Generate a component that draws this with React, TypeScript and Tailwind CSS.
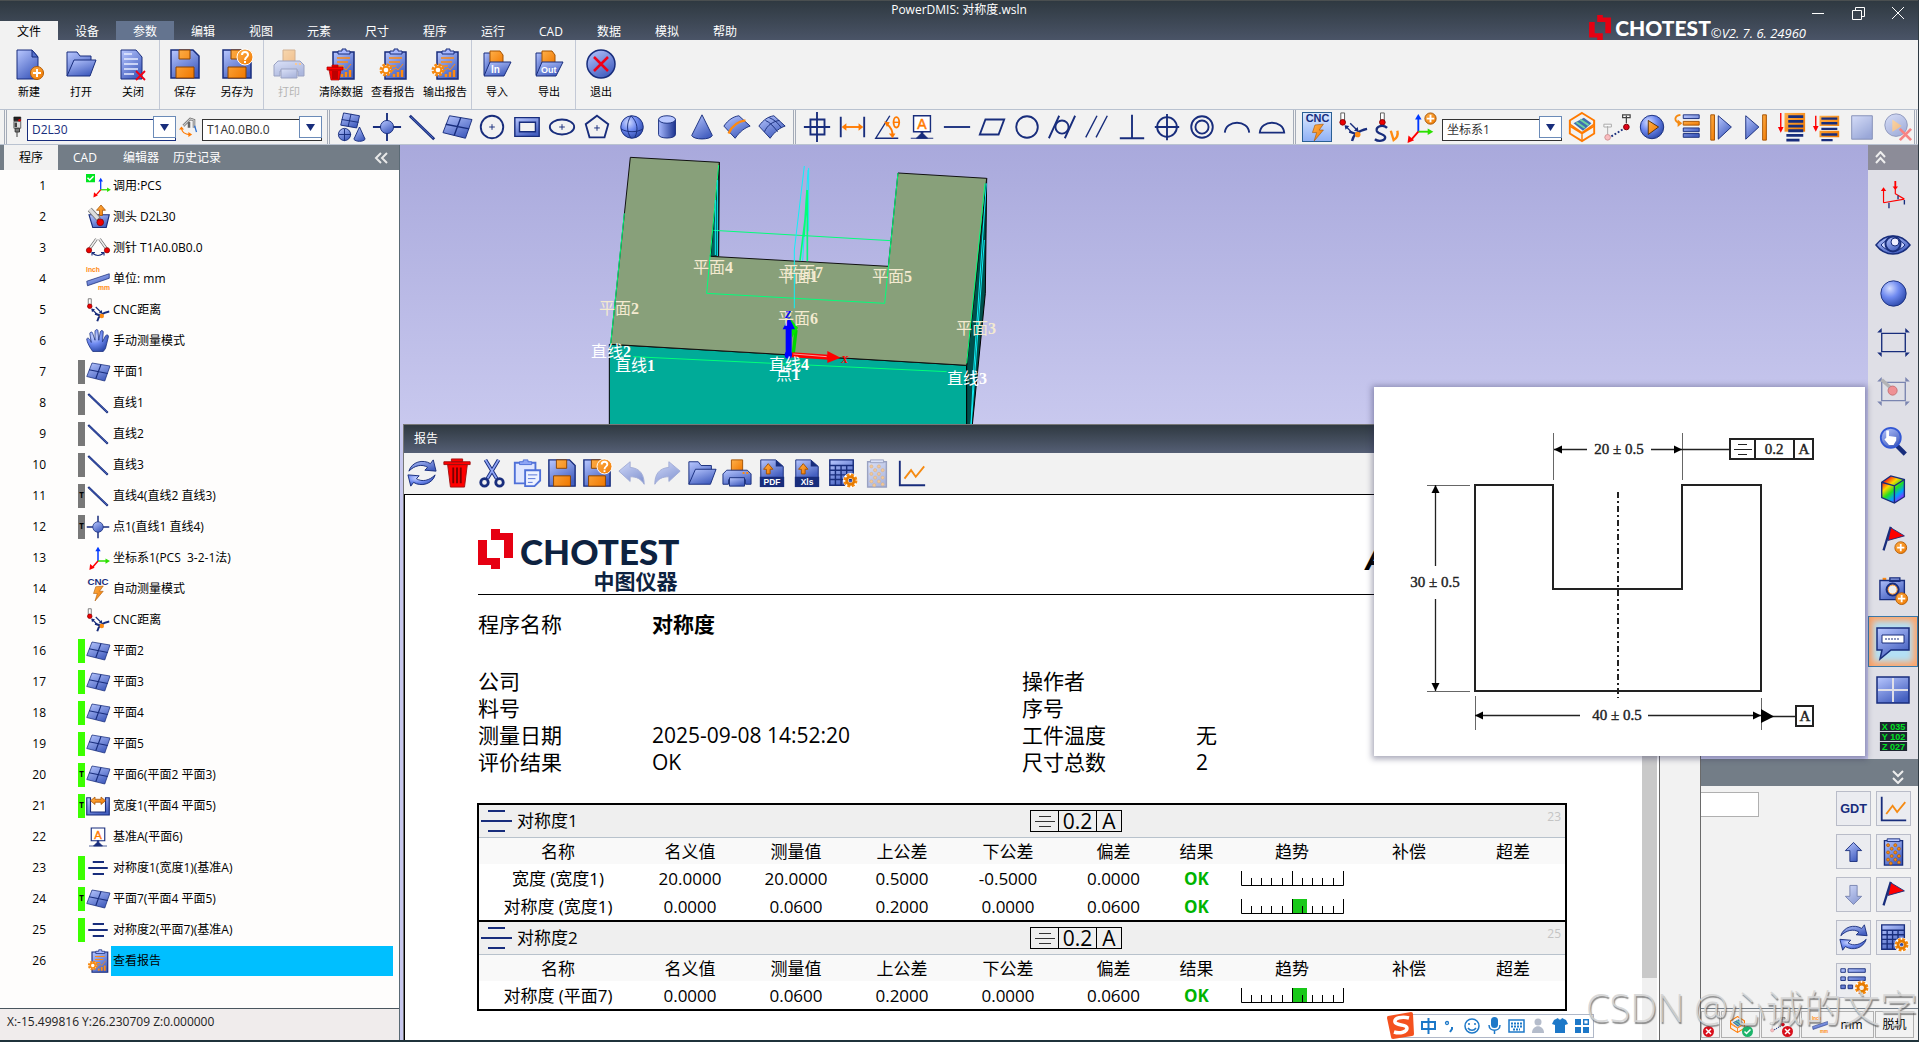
import React, { useState } from 'react';

interface Row {
  icon: string;
  label: string;
  bar?: 'gray' | 'green';
  temp?: boolean;
}

interface Feature {
  id: number;
  title: string;
  rows: string[][];
}

const menus = ['文件', '设备', '参数', '编辑', '视图', '元素', '尺寸', '程序', '运行', 'CAD', '数据', '模拟', '帮助'];

const ribbon = [
  [['new', '新建'], ['open', '打开'], ['closeDoc', '关闭']],
  [['save', '保存'], ['saveAs', '另存为']],
  [['print', '打印'], ['clear', '清除数据'], ['report', '查看报告'], ['report', '输出报告']],
  [['in', '导入'], ['out', '导出']],
  [['exit', '退出']],
];

const featureTools = ['features', 'point', 'line', 'plane', 'circle', 'slot', 'ellipse', 'polygon', 'sphere', 'cylinder', 'cone', 'curve', 'surface'];
const toleranceTools = ['location', 'distance', 'angle', 'datum', 'straight', 'flat', 'round', 'cylindricity', 'parallel', 'perpendicular', 'position', 'concentric', 'arc', 'profile'];
const runTools = ['box3d', 'path', 'play', 'step', 'stepBar', 'stepEnd', 'listAll', 'listPart', 'stop', 'cancelRun'];
const viewTools = ['axes', 'eye', 'ball', 'frame', 'frameProbe', 'zoom', 'cube', 'flagAdd', 'camera', 'comment', 'quad', 'xyz'];
const reportTools = ['refresh', 'trash', 'cut', 'paste', 'save', 'saveAs', 'undo', 'redo', 'open', 'printer', 'pdf', 'xls', 'gridGear', 'dotsOff', 'chart'];
const dockTools = ['gdt', 'chart', 'up', 'dots', 'down', 'flag', 'refresh', 'gridGear', 'listGear'];

const program: Row[] = [
  { icon: 'pcsOk', label: '调用:PCS' },
  { icon: 'probeHead', label: '测头 D2L30' },
  { icon: 'stylus', label: '测针 T1A0.0B0.0' },
  { icon: 'unit', label: '单位: mm' },
  { icon: 'cncDist', label: 'CNC距离' },
  { icon: 'hand', label: '手动测量模式' },
  { icon: 'plane', label: '平面1', bar: 'gray' },
  { icon: 'line', label: '直线1', bar: 'gray' },
  { icon: 'line', label: '直线2', bar: 'gray' },
  { icon: 'line', label: '直线3', bar: 'gray' },
  { icon: 'line', label: '直线4(直线2 直线3)', bar: 'gray', temp: true },
  { icon: 'point', label: '点1(直线1 直线4)', bar: 'gray', temp: true },
  { icon: 'pcs', label: '坐标系1(PCS  3-2-1法)' },
  { icon: 'cnc', label: '自动测量模式' },
  { icon: 'cncDist', label: 'CNC距离' },
  { icon: 'plane', label: '平面2', bar: 'green' },
  { icon: 'plane', label: '平面3', bar: 'green' },
  { icon: 'plane', label: '平面4', bar: 'green' },
  { icon: 'plane', label: '平面5', bar: 'green' },
  { icon: 'plane', label: '平面6(平面2 平面3)', bar: 'green', temp: true },
  { icon: 'width', label: '宽度1(平面4 平面5)', bar: 'green', temp: true },
  { icon: 'datum', label: '基准A(平面6)' },
  { icon: 'symmetry', label: '对称度1(宽度1)(基准A)', bar: 'green' },
  { icon: 'plane', label: '平面7(平面4 平面5)', bar: 'green', temp: true },
  { icon: 'symmetry', label: '对称度2(平面7)(基准A)', bar: 'green' },
  { icon: 'report', label: '查看报告' },
];

const columns = ['名称', '名义值', '测量值', '上公差', '下公差', '偏差', '结果', '趋势', '补偿', '超差'];

const results: Feature[] = [
  {
    id: 23,
    title: '对称度1',
    rows: [
      ['宽度 (宽度1)', '20.0000', '20.0000', '0.5000', '-0.5000', '0.0000'],
      ['对称度 (宽度1)', '0.0000', '0.0600', '0.2000', '0.0000', '0.0600'],
    ],
  },
  {
    id: 25,
    title: '对称度2',
    rows: [['对称度 (平面7)', '0.0000', '0.0600', '0.2000', '0.0000', '0.0600']],
  },
];

// canvas labels: text, number, x, y
const canvasLabels: [string, string, number, number][] = [
  ['平面', '4', 293, 128],
  ['平面', '7', 383, 133],
  ['平面', '1', 378, 137],
  ['平面', '5', 472, 137],
  ['平面', '2', 199, 169],
  ['平面', '6', 378, 179],
  ['平面', '3', 556, 189],
  ['直线', '2', 191, 212],
  ['直线', '1', 215, 226],
  ['直线', '4', 369, 225],
  ['点', '1', 376, 235],
  ['直线', '3', 547, 239],
];

const N = '#182d7c';
const B = 'url(#blue)';
const O = 'url(#orange)';

const gear = (
  <>
    <circle cx="25" cy="24" r="5" fill="none" stroke="#fff" strokeWidth="6" />
    <circle cx="25" cy="24" r="6" fill="none" stroke="#f58a12" strokeWidth="3" strokeDasharray="3 1.7" />
    <circle cx="25" cy="24" r="4" fill="none" stroke="#e57b00" strokeWidth="3" />
  </>
);
const plus = (
  <>
    <circle cx="24" cy="24" r="6.5" fill={O} stroke="#b55a00" />
    <path d="M24 20v8M20 24h8" stroke="#fff" strokeWidth="2" />
  </>
);
const doc = <path d="M4 2h15l6 7v22H4z" fill={B} stroke={N} />;
const folder = (
  <>
    <path d="M2 28V4h10l3 4h11v5" fill={B} stroke={N} />
    <path d="M2 28 9 12h22l-6 16z" fill={B} stroke={N} />
  </>
);
const floppy = (
  <>
    <path d="M2 2h22l6 6v22H2z" fill={B} stroke={N} strokeWidth="1.5" />
    <path d="M10 2h11v9H10zM7 19h18v11H7z" fill={O} stroke="#8a4300" />
  </>
);
const clipboard = (
  <>
    <path d="M8 4h21v27H8z" fill={B} stroke={N} strokeWidth="1.5" />
    <path d="M13 6V3h4V1h4v2h4v3z" fill="#a9baff" stroke={N} />
    <path d="M12 10h13M12 14h11M12 18h7" stroke="#ff8a10" strokeWidth="1.5" />
    <path d="m15 23 4-3 2 2 5-6" fill="none" stroke="#ff8a10" />
    <path d="M17 29v-3M21 29v-5M25 29v-7" stroke="#ff8a10" strokeWidth="2.5" />
  </>
);
const printerShape = (
  <>
    <path d="M10 2h12v12H10z" fill={O} stroke="#a55200" />
    <path d="M5 13h22l4 4v11h-6v-5H7v5H1V17z" fill={B} stroke={N} />
    <path d="M8 21h16v9H8z" fill={B} stroke={N} />
    <path d="M22 16h2M26 16h2" stroke="#ff8a10" strokeWidth="2" />
  </>
);
const flagShape = (
  <>
    <path d="M5 28 13 2" stroke={N} strokeWidth="2.5" />
    <path d="m13 3 15 9-18 5z" fill="#f00" stroke={N} />
  </>
);
const frameShape = (
  <>
    <path d="M3 6h26v20H3z" fill="none" stroke={N} strokeWidth="1.5" />
    <path d="M-2 5h5V0zM34 5h-5V0zM-2 27h5v5zM34 27h-5v5z" fill={N} />
  </>
);
const dotsShape = (
  <>
    <path d="M6 4h20v27H6z" fill={B} stroke={N} strokeWidth="1.5" />
    <path d="M9 5V2h14v3z" fill="#b9c8ff" stroke={N} />
    {[[10, 9], [18, 9], [14, 13], [22, 13], [10, 17], [18, 17], [14, 21], [22, 21], [10, 25], [18, 25], [22, 28], [13, 29]].map(([x, y]) => (
      <circle key={`${x}-${y}`} cx={x} cy={y} r="1.7" fill="#f58a12" stroke="#a55200" strokeWidth="0.6" />
    ))}
  </>
);
const axesShape = (
  <>
    <path d="M16 20V5" stroke="#0038ff" strokeWidth="2" />
    <path d="m12.500 7 3.500-6 3.500 6z" fill="#0038ff" />
    <path d="M16 20h11" stroke="#2be000" strokeWidth="2" />
    <path d="m26 16.500 6 3.500-6 3.500z" fill="#2be000" />
    <path d="m16 20-7 8" stroke="#f00" strokeWidth="2" />
    <path d="m11.500 29-7 3 1-8z" fill="#f00" />
  </>
);
const cncDistShape = (
  <>
    <path d="M3 1h4v8H3z" fill="#fff" stroke="#555" />
    <circle cx="5" cy="11" r="3" fill="#e00" stroke="#800" />
    <path d="m13 12 7 7M8 15l7 7" stroke={N} strokeWidth="1.5" />
    <path d="m22 21-1-5-4 4zM7 14l5 1-4 4z" fill={N} />
    <path d="M15 31c1-6 6-11 16-13M21 24l-9-3" fill="none" stroke={N} strokeWidth="2.500" />
    <circle cx="21" cy="24" r="3" fill="#ff8a10" />
  </>
);
const arrowLines = (
  <path d="M12 5h16M12 10h16M12 15h16M12 20h16" stroke={N} strokeWidth="3" />
);

const icons: Record<string, React.ReactNode> = {
  new: <>{doc}<path d="M19 2v7h6z" fill="#5672cf" stroke={N} /><g transform="translate(0 1)">{plus}</g></>,
  open: folder,
  closeDoc: <>{doc}<path d="M7 6h8M7 11h14M7 16h14M7 21h14M7 26h10" stroke="#e8edff" strokeWidth="1.5" /><path d="m19 23 9 9M28 23l-9 9" stroke="#f00018" strokeWidth="1.8" /></>,
  save: floppy,
  saveAs: <>{floppy}<circle cx="24" cy="9" r="8" fill={O} stroke="#fff" /><path d="M21 7c0-4 6-4 6 0 0 2-3 2-3 5M24 13v2" fill="none" stroke="#fff" strokeWidth="2" /></>,
  print: <g opacity="0.4">{printerShape}</g>,
  printer: printerShape,
  clear: <>{clipboard}<path d="M2 19h16v3H2zM7 17h6v2H7zM4 22h12l-2 10H6z" fill="#f00" stroke="#a00" strokeWidth="0.7" /><path d="M8 23v8M10 23v8M12 23v8" stroke="#7a0000" /></>,
  report: <>{clipboard}<circle cx="9" cy="22" r="5" fill="#fff" /><circle cx="9" cy="22" r="5" fill="none" stroke="#f58a12" strokeWidth="3" strokeDasharray="2.600 1.300" /><circle cx="9" cy="22" r="3.300" fill="#fff" stroke="#f58a12" strokeWidth="2" /></>,
  in: <><path d="M3 5h7v22H3z" fill={B} stroke={N} /><path d="M9 3h10l3 4v10H9z" fill={O} stroke="#a55200" /><path d="m3 28 6-14h21l-7 14z" fill={B} stroke={N} /><text x="10" y="25" fontSize="10" fontWeight="700" fill="#fff">In</text></>,
  out: <><path d="M3 5h7v22H3z" fill={B} stroke={N} /><path d="M9 3h10l3 4v10H9z" fill={O} stroke="#a55200" /><path d="m3 28 6-14h21l-7 14z" fill={B} stroke={N} /><text x="8" y="25" fontSize="9" fontWeight="700" fill="#fff">Out</text></>,
  exit: <><circle cx="16" cy="16" r="14" fill={B} stroke={N} strokeWidth="1.5" /><path d="m9 9 14 14M23 9 9 23" stroke="#f00018" strokeWidth="2.500" /></>,
  features: <><path d="m7 1 17 3-3 13-17-3z" fill={B} stroke={N} /><path d="m15 2-3 13M5 8l18 3" stroke={N} /><circle cx="8" cy="24" r="6.500" fill={B} stroke={N} /><path d="M2 24h13M8 18v13" stroke={N} /><path d="m24 16 6 13c-2 3-10 3-12 0z" fill={B} stroke={N} /></>,
  point: <><path d="M16 1v30M1 16h30" stroke={N} strokeWidth="2" /><circle cx="16" cy="16" r="7" fill={B} stroke={N} /></>,
  line: <><path d="m3 4 26 25" stroke={N} strokeWidth="3" /><path d="m4 5 24 23" stroke="#5672cf" /></>,
  plane: <><path d="m8 4 24 4-7 20-24-6z" fill={B} stroke={N} /><path d="m20 6-7 19M4 13l25 5" stroke={N} strokeWidth="1.500" /></>,
  circle: <><circle cx="16" cy="16" r="12" fill="none" stroke={N} strokeWidth="2" /><path d="M16 13v6M13 16h6" stroke={N} /></>,
  slot: <><path d="M3 6h26v20H3z" fill={B} stroke={N} strokeWidth="1.500" /><path d="M8 11h17v10H8z" fill="#f2f2f2" stroke={N} strokeWidth="1.500" /></>,
  ellipse: <><ellipse cx="16" cy="16" rx="13" ry="8" fill="none" stroke={N} strokeWidth="2" /><path d="M16 13v6M13 16h6" stroke={N} /></>,
  polygon: <><path d="m16 4 12 9-4 14H8L4 13z" fill="none" stroke={N} strokeWidth="2" /><path d="M16 14v6M13 17h6" stroke={N} /></>,
  sphere: <><circle cx="16" cy="16" r="12" fill="url(#ball)" stroke={N} /><path d="M4 18c7 4 17 4 24 0M15 4c-5 7-5 17 0 24M15 4c7 7 8 15 4 23" fill="none" stroke={N} /></>,
  cylinder: <><path d="M7 8v16c0 5 18 5 18 0V8z" fill="url(#tube)" stroke={N} /><ellipse cx="16" cy="8" rx="9" ry="4" fill="#b9c8ff" stroke={N} /></>,
  cone: <path d="m16 3 11 22c-2 5-20 5-22 0z" fill={B} stroke={N} />,
  curve: <><path d="M2 15C7 8 12 5 18 4l12 11c-6 2-11 6-16 13z" fill={B} stroke={N} /><path d="M7 23C11 14 17 10 25 9" fill="none" stroke="#ff8a10" strokeWidth="2.500" /></>,
  surface: <><path d="M2 15C7 8 12 5 18 4l12 11c-6 2-11 6-16 13z" fill={B} stroke={N} /><path d="M8 21c3-7 9-11 16-12M9 9c5 2 9 7 13 12M13 6c5 2 10 6 13 11" fill="none" stroke={N} /></>,
  location: <><path d="M16 0v32M2 16h28" stroke={N} strokeWidth="2" /><path d="M9 8h15v16H9z" fill="none" stroke={N} strokeWidth="2" /></>,
  distance: <><path d="M4 5v22M29 5v22" stroke={N} strokeWidth="2" /><path d="M8 16h17" stroke="#ff7a00" strokeWidth="2" /><path d="m5 16 5-4v8zM28 16l-5-4v8z" fill="#ff7a00" /></>,
  angle: <><path d="M19 4 4 28h24" fill="none" stroke={N} strokeWidth="1.500" /><path d="M16 13c4 3 6 6 6 12" fill="none" stroke="#ff7a00" strokeWidth="2" /><path d="m13 10 6 1-3 5zM18 23h7l-3 5z" fill="#ff7a00" /><ellipse cx="26" cy="11" rx="3" ry="5.500" fill="none" stroke="#ff7a00" strokeWidth="2" /><path d="M23 11h6" stroke="#ff7a00" strokeWidth="1.500" /></>,
  datum: <><path d="M7 4h18v17H7z" fill="#fff" stroke={N} strokeWidth="1.500" /><text x="16" y="18" fontSize="15" textAnchor="middle" fill="#ff7a00" stroke="#ff7a00" strokeWidth="0.5">A</text><path d="M15 21h2v2l5 5H10l5-5zM4 28h24" fill={N} stroke={N} /></>,
  straight: <path d="M2 16h28" stroke={N} strokeWidth="2" />,
  flat: <path d="M9 8h20l-6 16H3z" fill="none" stroke={N} strokeWidth="2" />,
  round: <circle cx="16" cy="16" r="11.500" fill="none" stroke={N} strokeWidth="2" />,
  cylindricity: <><circle cx="16" cy="16" r="7" fill="none" stroke={N} strokeWidth="2" /><path d="M2 28 13 4M19 28 30 4" stroke={N} strokeWidth="2" /></>,
  parallel: <path d="M4 27 16 4M15 27 27 4" stroke={N} strokeWidth="1.500" />,
  perpendicular: <path d="M16 3v25M3 28h26" stroke={N} strokeWidth="2" />,
  position: <><circle cx="16" cy="16" r="10.500" fill="none" stroke={N} strokeWidth="2" /><path d="M16 2v28M3 16h26" stroke={N} strokeWidth="2" /></>,
  concentric: <><circle cx="16" cy="16" r="11.500" fill="none" stroke={N} strokeWidth="2" /><circle cx="16" cy="16" r="7" fill="none" stroke={N} strokeWidth="2" /></>,
  arc: <path d="M3 22c1-14 25-14 26 0" fill="none" stroke={N} strokeWidth="2" />,
  profile: <path d="M3 22c1-14 25-14 26 0z" fill="none" stroke={N} strokeWidth="2" />,
  cnc: <><text x="16" y="10" fontSize="13" fontWeight="700" textAnchor="middle" fill={N}>CNC</text><path d="m13 13 10-1-5 7h5L12 32l3-10h-5z" fill={O} stroke="#a55200" strokeWidth="0.700" /></>,
  cncDist: cncDistShape,
  speed: <><path d="M8 1h4v8H8z" fill="#fff" stroke="#555" /><circle cx="10" cy="11" r="3" fill="#e00" stroke="#800" /><path d="M15 17c-4-4-12-2-11 3 1 4 9 3 9 7 0 4-7 5-11 2" fill="none" stroke={N} strokeWidth="2.500" /><path d="m19 20 3 10c3-2 5-6 4-10" fill="none" stroke="#ff8a10" strokeWidth="2.500" /></>,
  pcsAdd: <><g transform="translate(-5 1)">{axesShape}</g><circle cx="24" cy="7" r="6" fill={O} stroke="#a55200" /><path d="M24 3v8M20 7h8" stroke="#fff" strokeWidth="2" /></>,
  pcs: axesShape,
  pcsOk: <><g transform="translate(6 4) scale(0.850)">{axesShape}</g><path d="M0 0h12v11H0z" fill="#00e520" /><path d="m2 5 3 3 5-5" fill="none" stroke="#fff" strokeWidth="2" /></>,
  box3d: <><path d="m16 1 13 8v14l-13 8L3 23V9z" fill="none" stroke="#ff7a00" strokeWidth="2" /><path d="M16 23v8M3 9v4l13 9 13-9V9M3 15l13 8 13-8" fill="none" stroke="#ff7a00" strokeWidth="1.500" /><path d="m7 12 11-6 8 6-9 8z" fill="#3f6fb0" /><path d="m10 11 9 6M14 8l9 6" stroke="#6fd3a0" strokeWidth="2" /></>,
  path: <><path d="M26 4v8M22 3h8v3h-8z" fill="#fff" stroke="#444" strokeWidth="1.300" /><circle cx="26" cy="16" r="3" fill="#e00018" stroke="#700" /><g opacity="0.600"><path d="M6 15v10M2 13h8v3H2z" fill="#fff" stroke="#777" /><circle cx="6" cy="27" r="3" fill="#ff9aa0" stroke="#b55" /></g><path d="m10 26 13-8" stroke={N} strokeWidth="2" strokeDasharray="2 2" /></>,
  play: <><circle cx="16" cy="16" r="12.500" fill="url(#ball)" stroke={N} /><path d="m12 9 11 7-11 8z" fill={O} stroke="#5a3000" /></>,
  step: <><path d="M12 3h17v4H12zM12 17h17v4H12zM12 23h17v4H12z" fill={B} stroke={N} /><path d="M12 10h17v4H12z" fill={O} stroke="#a55200" /><path d="M9 3C2 4 2 10 8 12" fill="none" stroke="#f58a12" strokeWidth="2" /><path d="m6 8 5 4-5 4z" fill="#f58a12" /></>,
  stepBar: <><path d="M4 3h4v27H4z" fill={O} stroke="#a55200" /><path d="m12 4 14 12-14 13z" fill={B} stroke={N} /></>,
  stepEnd: <><path d="m4 4 14 12L4 29z" fill={B} stroke={N} /><path d="M22 3h4v27h-4z" fill={O} stroke="#a55200" /></>,
  listAll: <><path d="M8 1h22v20H8z" fill={O} /><g>{arrowLines}</g><path d="M10 25h18M10 30h14" stroke={N} strokeWidth="3" /><path d="M4 1v17" stroke="#f00" strokeWidth="1.500" /><path d="M1 16h6l-3 6z" fill="#f00" /></>,
  listPart: <><path d="M8 4h21v11H8zM8 20h21v7H8z" fill={O} /><path d="M10 7h17M10 12h17M10 18h17M10 24h17M10 30h12" stroke={N} strokeWidth="2.500" /><path d="M4 4v13" stroke="#f00" strokeWidth="1.500" /><path d="M1 15h6l-3 6z" fill="#f00" /></>,
  stop: <path d="M5 4h22v25H5z" fill={B} stroke={N} opacity="0.500" />,
  cancelRun: <g opacity="0.450"><circle cx="15" cy="14" r="12" fill={B} stroke={N} /><path d="m11 8 10 7-10 6z" fill={O} /><path d="m19 18 12 12M31 18 19 30" stroke="#f00" strokeWidth="3" /></g>,
  probe: <><path d="M11 0h11v6H11z" fill="#222" stroke="#111" /><path d="M11 7h11v11H11z" fill="#ddd" stroke="#222" /><path d="M13 18h7v6h-7zM16 24v8" stroke="#333" fill="#777" strokeWidth="1.500" /><path d="M12 9h4v7h-4z" fill="#444" /><circle cx="20" cy="5" r="2" fill="#d00" /></>,
  probeAngle: <><path d="M7 14 18 3l6 2v12M16 8v9" fill="none" stroke="#666" strokeWidth="4" /><path d="M7 14 18 3l6 2v12" fill="none" stroke="#ccc" strokeWidth="2" /><path d="m25 14 3 10" stroke="#2b6fd0" strokeWidth="2" /><path d="M4 18c1 7 6 10 13 10" fill="none" stroke="#ff7a00" strokeWidth="2" /><path d="m0 20 4-5 4 5zM15 24l6 4-6 4z" fill="#ff7a00" /></>,
  probeHead: <><path d="M4 13h27l-4 17H9z" fill={B} stroke={N} strokeWidth="1.500" /><path d="m5 6 12 13" stroke="#777" strokeWidth="7" /><path d="m5 6 11 12" stroke="#ddd" strokeWidth="4.500" /><path d="M18 14V7h-4l6-7 6 7h-4v7z" fill={O} stroke="#a55200" /><circle cx="19" cy="23" r="4.500" fill="#e00" stroke="#800" /></>,
  stylus: <><path d="m14 4-10 14M18 4l10 14" stroke="#666" strokeWidth="4" /><path d="m14 4-10 14M18 4l10 14" stroke="#eee" strokeWidth="2" /><circle cx="4" cy="19" r="3.500" fill="#e00" stroke="#800" /><circle cx="28" cy="19" r="3.500" fill="#e00" stroke="#800" /><path d="M9 23c4 4 10 4 14 0M8 26v-4h4M24 26v-4h-4" fill="none" stroke={N} strokeWidth="1.500" /></>,
  unit: <><text x="0" y="6" fontSize="9" fontWeight="700" fill="#ff8a10">Inch</text><path d="m1 19 30-10v6L2 25z" fill={B} stroke={N} /><text x="16" y="31" fontSize="9" fontWeight="700" fill="#ff8a10">mm</text></>,
  hand: <path d="M9 30C6 26 1 18 1 13c2-2 4 0 6 5L5 6c1-3 4-2 4 0l3 9V3c1-3 4-3 4 0l1 12 2-11c1-3 4-2 4 0l-1 13 4-8c2-2 4-1 4 1l-4 16-3 4z" fill="url(#ball)" stroke={N} />,
  width: <><path d="M1 5h5v19h20V5h5v23H1z" fill={B} stroke={N} strokeWidth="1.500" /><path d="m6 9 6-5v3h8V4l6 5-6 5v-3h-8v3z" fill={O} stroke="#a55200" /></>,
  symmetry: <path d="M9 8h15M3 16h26M9 24h15" stroke={N} strokeWidth="2.500" />,
  axes: <><path d="M5 24V10M28 20 18 14V7M5 24l23-4" fill="none" stroke="#f00" strokeWidth="1.300" /><path d="M2 11h6l-3-4zM15 6h6l-3 4zM17 0h2v6h-2z" fill="#f00" /><path d="M11 24v6M28 21v5M21 16v4" stroke={N} strokeWidth="1.500" /></>,
  eye: <><path d="M-1 16C8 4 24 4 33 16 24 28 8 28-1 16z" fill={B} stroke={N} strokeWidth="1.500" /><path d="M4 16c7-8 17-8 24 0-7 8-17 8-24 0z" fill="#c9d4ff" stroke={N} /><circle cx="16" cy="15" r="7.500" fill={B} stroke={N} strokeWidth="2" /><circle cx="18" cy="13" r="4" fill="#eef" stroke={N} /></>,
  ball: <circle cx="16" cy="16" r="14" fill="url(#ball)" stroke={N} />,
  frame: frameShape,
  frameProbe: <g opacity="0.500">{frameShape}<path d="m3 3 11 10" stroke="#888" strokeWidth="4" /><circle cx="15" cy="15" r="5" fill="#f44" stroke="#a00" /></g>,
  zoom: <><path d="m20 22 9 9" stroke={N} strokeWidth="5" /><circle cx="13" cy="13" r="11" fill={B} stroke="#3358d4" strokeWidth="2" /><path d="M8 13V5h3v6l8 1v4l-3 5h-5l-5-6z" fill="#fff" /></>,
  cube: <><path d="m3 8 10-7 15 4v19l-11 7L3 25z" fill="url(#rainbow)" stroke={N} strokeWidth="1.500" /><path d="m3 8 14 4 11-7M17 12v19" fill="none" stroke={N} strokeWidth="1.500" /></>,
  flagAdd: <>{flagShape}<g transform="translate(0 1)">{plus}</g></>,
  flag: flagShape,
  camera: <><path d="M4 2h4v3H4z" fill="#ff8a10" /><path d="M12 2h11v4H12zM1 5h27v21H1z" fill={B} stroke={N} strokeWidth="1.500" /><circle cx="15" cy="15" r="6.500" fill="#e8edff" stroke={N} strokeWidth="2.500" /><circle cx="15" cy="15" r="5" fill="#eee" stroke="#ff8a10" /><g transform="translate(1 1)">{plus}</g></>,
  comment: <><path d="M0 2h32v22H14L3 33l2-9H0z" fill={B} stroke={N} strokeWidth="1.500" /><path d="M5 9h22v8H5z" fill="#fff" stroke={N} /><path d="M8 13h15" stroke={N} strokeDasharray="2 1" /></>,
  quad: <><path d="M0 3h32v26H0z" fill={B} stroke={N} strokeWidth="1.500" /><path d="M16 4v24M1 16h30" stroke="#dfdfe8" strokeWidth="2" /></>,
  xyz: <>{['X 035', 'Y 102', 'Z 027'].map((t, i) => (<g key={t}><path d={`M1 ${i * 11}h30v10H1z`} fill="#1d2430" /><text x="16" y={i * 11 + 9} fontSize="10" fontWeight="700" textAnchor="middle" fill="#00e520">{t}</text></g>))}</>,
  refresh: <><path d="M2 14C5 4 17 1 25 6l3-4 3 12-12-1 3-3C16 6 8 8 2 14z" fill={B} stroke={N} /><path d="M30 18c-3 10-15 13-23 8l-3 4-3-12 12 1-3 3c6 4 14 2 20-4z" fill="url(#ball)" stroke={N} /></>,
  trash: <><path d="M2 4h28v3H2zM10 1h12v3H10zM6 7h21l-3 24H9z" fill="#f00" stroke="#a01010" /><path d="M12 10v17M16 10v17M20 10v17" stroke="#7a0000" strokeWidth="2" /></>,
  cut: <><path d="M9 2 21 22M23 2 11 22" stroke={N} strokeWidth="4" /><path d="M9 2 21 22M23 2 11 22" stroke="#8fa5f5" strokeWidth="2" /><circle cx="8" cy="26" r="4" fill="none" stroke={N} strokeWidth="3" /><circle cx="24" cy="26" r="4" fill="none" stroke={N} strokeWidth="3" /></>,
  paste: <><path d="M3 5h22v22H3z" fill="#dfe6ff" stroke="#4f70d8" strokeWidth="2" /><path d="M8 7V4h4V2h5v2h4v3z" fill="#8fa5f5" stroke="#4f70d8" /><path d="M14 13h16v11l-6 6H14z" fill="#eef2ff" stroke="#4f70d8" strokeWidth="2" /><path d="M17 18h10M17 22h8M17 26h5" stroke="#4f70d8" /></>,
  undo: <path d="M2 14 14 4v6c11 1 15 8 15 18-4-6-8-8-15-8v5z" fill={B} stroke="#6d7fc4" opacity="0.600" />,
  redo: <path d="M30 14 18 4v6C7 11 3 18 3 28c4-6 8-8 15-8v5z" fill={B} stroke="#6d7fc4" opacity="0.600" />,
  pdf: <><path d="M4 2h16l8 7v12H4z" fill={B} stroke={N} /><path d="M20 2v7h8z" fill={N} /><path d="M3 20h26v11H3z" fill={N} /><path d="M10 17v-5H7l5-6 5 6h-3v5z" fill={O} stroke="#a55200" /><text x="16" y="29" fontSize="9" fontWeight="700" textAnchor="middle" fill="#fff">PDF</text></>,
  xls: <><path d="M4 2h16l8 7v12H4z" fill={B} stroke={N} /><path d="M20 2v7h8z" fill={N} /><path d="M3 20h26v11H3z" fill={N} /><path d="M10 17v-5H7l5-6 5 6h-3v5z" fill={O} stroke="#a55200" /><text x="16" y="29" fontSize="9" fontWeight="700" textAnchor="middle" fill="#fff">Xls</text></>,
  gridGear: <><path d="M3 2h25v27H3z" fill={B} stroke={N} strokeWidth="1.500" /><path d="M3 8h25M3 13h25M3 18h25M3 23h25M9 8v21M15 8v21M21 8v21" stroke={N} strokeWidth="1.500" />{gear}</>,
  listGear: <><path d="M2 3h5v4H2zM10 3h19v4H10zM2 12h5v4H2zM10 12h19v4H10zM2 21h5v4H2zM10 21h5v4h-5z" fill={B} stroke={N} />{gear}</>,
  dots: dotsShape,
  dotsOff: <g opacity="0.400">{dotsShape}</g>,
  chart: <><path d="M3 3v26h27" fill="none" stroke={N} strokeWidth="2" /><path d="m8 22 7-9 5 7 9-11" fill="none" stroke="#f58a12" strokeWidth="2" /></>,
  gdt: <text x="16" y="21" fontSize="14" fontWeight="700" textAnchor="middle" fill={N}>GDT</text>,
  up: <path d="m16 6 9 9h-5v12h-8V15H7z" fill={B} stroke={N} />,
  down: <path d="m16 27 9-9h-5V6h-8v12H7z" fill={B} stroke={N} opacity="0.550" />,
};

function Icon({ name, size = 32 }: { name: string; size?: number }) {
  return (
    <svg width={size} height={size} viewBox="0 0 32 32" className="shrink-0 overflow-visible font-['Liberation_Sans',sans-serif]" aria-hidden="true">
      {icons[name]}
    </svg>
  );
}

function Gradients() {
  return (
    <svg width="0" height="0" className="absolute" aria-hidden="true">
      <defs>
        <linearGradient id="blue" x1="0" y1="0" x2="0.600" y2="1">
          <stop offset="0" stopColor="#b9c8ff" />
          <stop offset="1" stopColor="#4560c0" />
        </linearGradient>
        <linearGradient id="orange" x1="0" y1="0" x2="1" y2="1">
          <stop offset="0" stopColor="#ffb04a" />
          <stop offset="1" stopColor="#f07800" />
        </linearGradient>
        <linearGradient id="tube">
          <stop offset="0" stopColor="#a9baff" />
          <stop offset="1" stopColor="#1c3490" />
        </linearGradient>
        <radialGradient id="ball" cx="0.350" cy="0.300" r="0.800">
          <stop offset="0" stopColor="#d4ddff" />
          <stop offset="0.450" stopColor="#6f8af0" />
          <stop offset="1" stopColor="#2340a0" />
        </radialGradient>
        <linearGradient id="rainbow" x1="0.200" y1="0" x2="0.900" y2="1">
          <stop offset="0.100" stopColor="#ff2a10" />
          <stop offset="0.300" stopColor="#ffd800" />
          <stop offset="0.500" stopColor="#20e020" />
          <stop offset="0.700" stopColor="#00a0ff" />
          <stop offset="0.950" stopColor="#d000ff" />
        </linearGradient>
      </defs>
    </svg>
  );
}

function LogoMark({ className }: { className: string }) {
  return (
    <svg viewBox="0 0 35 40" className={className} aria-hidden="true">
      <path fill="#e60012" d="M13 0h9v4h13v25h-9V11H13zM0 11h9v18h13v11h-9v-4H0z" />
    </svg>
  );
}

function Combo({ label, value, className }: { label: string; value: string; className: string }) {
  return (
    <div className={`relative h-[22px] shrink-0 ${className}`}>
      <select aria-label={label} className="h-full w-full appearance-none border border-current bg-white pl-1 text-xs outline-none">
        <option>{value}</option>
      </select>
      <span className="pointer-events-none absolute inset-y-0 right-0 flex w-[23px] items-center justify-center border border-[#6b8bb8] bg-white">
        <svg width="9" height="7" viewBox="0 0 9 7"><path d="M0 0h9L4.500 7z" fill={N} /></svg>
      </span>
    </div>
  );
}

function Separator({ className }: { className: string }) {
  return (
    <div className={`flex h-full shrink-0 justify-center ${className}`}>
      <span className="h-full w-[3px] border-x border-[#a4abb8]" />
    </div>
  );
}

function ToolButton({ name }: { name: string }) {
  return (
    <button type="button" aria-label={name} className="flex h-8 w-[35px] shrink-0 items-center justify-center">
      <Icon name={name} size={30} />
    </button>
  );
}

function TitleBar({ active, onSelect }: { active: string; onSelect: (m: string) => void }) {
  return (
    <header className="grid h-10 grid-cols-[1fr_auto_1fr] border-t border-[#4a4f50] bg-linear-to-b from-[#2f3941] to-[#4a5467] text-xs text-white">
      <nav className="flex items-end">
        {menus.map((menu) => (
          <button
            key={menu}
            type="button"
            onClick={() => onSelect(menu)}
            className={`h-[19px] w-[58px] pt-0.5 ${menu === active ? 'bg-[#f2f2f2] text-black' : menu === '参数' ? 'bg-[#64748f]' : ''}`}
          >
            {menu}
          </button>
        ))}
      </nav>
      <h1 className="leading-[18px]">PowerDMIS: 对称度.wsln</h1>
      <div className="flex justify-end">
        <div className="-mr-2 flex items-end">
          <LogoMark className="mr-1 h-[25px] w-[22px]" />
          <span className="font-['Lato',sans-serif] text-[21px] leading-6 font-black">CHOTEST</span>
          <span className="text-[13px] leading-[14px] italic">©V2. 7. 6. 24960</span>
        </div>
        <button type="button" aria-label="最小化" className="flex h-6 w-10 items-center justify-center">
          <span className="h-px w-3 bg-white" />
        </button>
        <button type="button" aria-label="还原" className="flex h-6 w-10 items-center justify-center">
          <svg width="13" height="13" viewBox="0 0 13 13" fill="none" stroke="#fff"><path d="M.5 3.500h9v9h-9zM3.500 3V.5h9v9H10" /></svg>
        </button>
        <button type="button" aria-label="关闭" className="flex h-6 w-10 items-center justify-center">
          <svg width="12" height="12" viewBox="0 0 12 12" stroke="#fff"><path d="m0 0 12 12M12 0 0 12" /></svg>
        </button>
      </div>
    </header>
  );
}

function Ribbon() {
  return (
    <div className="flex h-[70px] border-b border-[#b9c2d0] pl-[3px]">
      {ribbon.map((group, i) => (
        <div key={i} className={`flex ${i < ribbon.length - 1 ? '-mr-px border-r border-[#c3c9d6]' : ''}`}>
          {group.map(([icon, label]) => (
            <button
              key={label}
              type="button"
              disabled={icon === 'print'}
              className="flex w-[52px] flex-col items-center pt-2 text-[11px] leading-4 whitespace-nowrap text-black disabled:text-[#b5b5b5]"
            >
              <Icon name={icon} />
              <span className="mt-1">{label}</span>
            </button>
          ))}
        </div>
      ))}
    </div>
  );
}

function Toolbar() {
  return (
    <div className="flex h-[35px] items-center border-b border-[#b9c2d0]">
      <Separator className="ml-1 w-[3px]" />
      <div className="flex w-5 justify-center"><Icon name="probe" size={20} /></div>
      <Combo label="测头" value="D2L30" className="w-[149px] text-[#182d7c]" />
      <div className="flex w-[26px] justify-center"><Icon name="probeAngle" size={20} /></div>
      <Combo label="测针" value="T1A0.0B0.0" className="w-[120px] text-[#333]" />
      <Separator className="w-3" />
      {featureTools.map((t) => <ToolButton key={t} name={t} />)}
      <Separator className="w-[10px]" />
      {toleranceTools.map((t) => <ToolButton key={t} name={t} />)}
      <Separator className="w-[10px]" />
      <button type="button" aria-label="cnc" className="mx-[3px] flex h-[30px] w-[30px] items-center justify-center border border-[#2a5f94] bg-linear-to-b from-[#dceaff] to-[#8fb0f5]">
        <Icon name="cnc" size={27} />
      </button>
      {['cncDist', 'speed', 'pcsAdd'].map((t) => <ToolButton key={t} name={t} />)}
      <Combo label="坐标系" value="坐标系1" className="mr-0.5 ml-0.5 w-[120px] text-[#333]" />
      {runTools.map((t) => <ToolButton key={t} name={t} />)}
      <Separator className="w-[3px]" />
    </div>
  );
}

function ProgramPanel() {
  const [selected, setSelected] = useState(25);

  return (
    <aside className="flex w-[400px] shrink-0 flex-col border-r border-[#5a6a75]">
      <div className="flex h-[25px] items-center bg-[#737d87] pl-1 text-xs text-white">
        <button type="button" className="h-full w-[54px] bg-[#f2f2f2] pt-px text-black">程序</button>
        <button type="button" className="h-full w-[54px] pt-px">CAD</button>
        <button type="button" className="h-full w-[58px] pt-px">编辑器</button>
        <button type="button" className="h-full w-[54px] pt-px">历史记录</button>
        <button type="button" aria-label="收起" className="mr-[11px] ml-auto">
          <svg width="14" height="12" viewBox="0 0 14 12" fill="none" stroke="#e8e8e8" strokeWidth="2"><path d="M7 1 2 6l5 5M13 1 8 6l5 5" /></svg>
        </button>
      </div>
      <ol className="flex-1 bg-[#fefdfc] text-xs text-black">
        {program.map((row, i) => (
          <li key={i} onClick={() => setSelected(i)} className="flex h-[31px] items-center">
            <span className="w-[46px] text-right">{i + 1}</span>
            <span
              className={`ml-8 flex h-6 w-[7px] items-center justify-center text-[8px] font-bold ${
                row.bar === 'gray' ? 'bg-[#787878]' : row.bar === 'green' ? 'bg-[#3cff00]' : ''
              }`}
            >
              {row.temp ? 'T' : ''}
            </span>
            <span className="mx-px"><Icon name={row.icon} size={24} /></span>
            <span className={`mr-[6px] flex h-[30px] flex-1 items-center pl-0.5 whitespace-pre ${selected === i ? 'bg-[#00bfff]' : ''}`}>
              {row.label}
            </span>
          </li>
        ))}
      </ol>
      <footer className="h-8 border-t border-[#4a565e] bg-[#f0ecec] pl-[7px] text-xs leading-[25px] text-[#222]">
        X:-15.499816 Y:26.230709 Z:0.000000
      </footer>
    </aside>
  );
}

function CadScene() {
  return (
    <svg className="h-full w-full font-['Liberation_Serif','Noto_Sans_CJK_SC',serif]">
      {/* solid body */}
      <g transform="translate(180 -5) scale(0.33333)" strokeWidth="3" fill="none">
        <path d="M88 613 1160 676v300H88z" fill="#00ab98" stroke="#000" />
        <path d="M1220 115 1216 460 1165 976h-5V676z" fill="#00504c" stroke="#000" />
        <path d="M418 67 416 349H391z" fill="#00605c" stroke="#000" />
        <path d="M151 52 418 67 391 349 925 379 954 99 1220 115 1160 676 92 613z" fill="#88a07a" stroke="#101010" />
        <path d="M133 220 92 613M416 75 380 460 914 490 954 99M400 271l532 31M160 650l940 45M1215 130l-55 540" stroke="#00ff7a" />
        <path d="M412 120v228M406 180v165M1219 130l-38 560-14 286M1213 300l-40 560M673 78 643 330v175M686 84v190M684 90 668 362" stroke="#10f0f8" />
        <path d="M682 150v214M680 200 660 362M681 150 672 290" stroke="#00ff7a" strokeWidth="5" />
        <path d="m640 640 8-70" stroke="#00d800" strokeWidth="10" />
        <path d="m630 535 24 28-18 30z" fill="#00e800" />
        <path d="M626 645V560" stroke="#0000ff" strokeWidth="18" />
        <path d="M608 568h37l-18-36z" fill="#0000ff" />
        <circle cx="625" cy="645" r="11" fill="#0000ff" />
        <path d="m636 644 110 8" stroke="#f00" strokeWidth="15" />
        <path d="m742 633 40 20-40 16z" fill="#f00" />
        <path d="m640 642 100 8" stroke="#ff9a9a" />
      </g>
      <g fontSize="16">
        {canvasLabels.map(([text, num, x, y]) => (
          <text key={text + num} x={x} y={y} fill={text === '平面' ? '#f3ead0' : '#fff'}>
            {text}
            <tspan fontWeight="700">{num}</tspan>
          </text>
        ))}
        <text x="385" y="173" fontSize="10" fontStyle="italic" fontWeight="700" fill="#00f">Z</text>
        <text x="441" y="218" fontSize="11" fontStyle="italic" fontWeight="700" fill="#f00">X</text>
      </g>
    </svg>
  );
}

function ViewTools() {
  return (
    <div className="flex w-[50px] shrink-0 flex-col bg-[#dfdfe6]">
      <button type="button" aria-label="折叠" className="flex h-[25px] items-center bg-[#8c8c98] pl-[7px]">
        <svg width="11" height="13" viewBox="0 0 11 13" fill="none" stroke="#eee" strokeWidth="2"><path d="m1 6 4.500-5L10 6M1 12l4.500-5 4.500 5" /></svg>
      </button>
      {viewTools.map((t, i) => (
        <button
          key={t}
          type="button"
          aria-label={t}
          className={`flex items-center justify-center ${i === 0 ? 'h-[50px]' : i < 7 ? 'h-[49px]' : i < 10 ? 'h-[51px]' : 'flex-1'} ${
            t === 'comment' ? 'border border-[#3a78a8] bg-[#b4e0f5] shadow-[inset_0_0_6px_4px_#ffa468]' : ''
          }`}
        >
          <Icon name={t} size={t === 'comment' || t === 'quad' || t === 'eye' ? 32 : 29} />
        </button>
      ))}
    </div>
  );
}

function Gauge({ value }: { value: number }) {
  return (
    <svg width="103" height="15" viewBox="0 0 103 15" className="mx-auto" aria-hidden="true">
      {value > 0 && <path d={`M51 0h${value * 50}v14H51z`} fill="#18c818" />}
      <path
        d="M.5 0v14.500h102V0M51.500 0v14M10.500 7v7M20.500 7v7M30.500 7v7M41.500 7v7M61.500 7v7M71.500 7v7M81.500 7v7M92.500 7v7"
        fill="none"
        stroke="#000"
      />
    </svg>
  );
}

function FeatureTable({ feature }: { feature: Feature }) {
  return (
    <section className="border-x-2 border-b-2 border-black">
      <div className="grid h-[33px] grid-cols-[551px_auto_1fr] items-center border-b border-[#b8c2cc] bg-[#efefef]">
        <h3 className="flex items-center text-[17px]">
          <svg width="31" height="22" viewBox="0 0 31 22" className="mr-[5px] ml-0.5" stroke={N} strokeWidth="2"><path d="M7 1h17M0 11h31M7 21h17" /></svg>
          {feature.title}
        </h3>
        <div className="flex h-[22px] items-center divide-x divide-black border border-black text-[21px] leading-5">
          <span className="flex h-full w-[28px] items-center justify-center">
            <svg width="20" height="12" viewBox="0 0 20 12" stroke="#333"><path d="M4 1.500h12M0 6.500h20M4 11.500h12" /></svg>
          </span>
          <span className="h-full w-[38px] text-center">0.2</span>
          <span className="h-full w-6 text-center">A</span>
        </div>
        <span className="self-start pt-1 pr-1 text-right text-xs text-[#c4c4c4]">{feature.id}</span>
      </div>
      <table className="w-full table-fixed text-center text-[17px] leading-[25px]">
        <colgroup>
          <col className="w-[158px]" />
          <col className="w-[106px]" />
          <col className="w-[106px]" />
          <col className="w-[106px]" />
          <col className="w-[106px]" />
          <col className="w-[105px]" />
          <col className="w-[61px]" />
          <col className="w-[130px]" />
          <col className="w-[104px]" />
          <col />
        </colgroup>
        <thead className="bg-[#f9f9f9]">
          <tr className="h-[26px]">
            {columns.map((c) => <th key={c} className="font-normal">{c}</th>)}
          </tr>
        </thead>
        <tbody>
          {feature.rows.map((row) => (
            <tr key={row[0]} className="h-[28px]">
              {row.map((cell, i) => <td key={i}>{cell}</td>)}
              <td className="font-bold text-[#00b400]">OK</td>
              <td><Gauge value={row[0].startsWith('宽度') ? 0 : 0.3} /></td>
              <td />
              <td />
            </tr>
          ))}
        </tbody>
      </table>
    </section>
  );
}

function ReportWindow() {
  return (
    <section className="absolute top-[279px] right-[217px] bottom-0 left-[3px] flex flex-col border-l border-[#777] bg-[#f2f2f2]">
      <h2 className="h-[29px] border-t border-[#777] bg-linear-to-b from-[#2f3941] to-[#555f75] pl-[10px] text-xs leading-[27px] text-white">报告</h2>
      <div className="flex h-[41px] items-start pt-1">
        {reportTools.map((t) => <ToolButton key={t} name={t} />)}
      </div>
      <div className="flex flex-1 border-t border-l border-black bg-white text-black">
        <div className="flex-1 pt-[34px] pr-[76px] pl-[73px]">
          <div className="flex h-[66px] items-start border-b border-black">
            <LogoMark className="mr-[7px] h-10 w-[35px]" />
            <div className="flex flex-col items-end text-[#0d2240]">
              <span className="mt-[10px] font-['Lato',sans-serif] text-[35px] leading-[25px] font-black">CHOTEST</span>
              <span className="mt-[5px] mr-0.5 text-[21px] leading-6 font-bold">中图仪器</span>
            </div>
            <span className="ml-auto w-[200px] pt-3 text-[30px] leading-9 font-bold italic">A</span>
          </div>
          <dl className="mt-4 grid grid-cols-[174px_370px_174px_1fr] text-[21px] leading-[27px]">
            <dt>程序名称</dt>
            <dd className="col-span-3 mb-[30px] font-bold">对称度</dd>
            <dt>公司</dt>
            <dd />
            <dt>操作者</dt>
            <dd />
            <dt>料号</dt>
            <dd />
            <dt>序号</dt>
            <dd />
            <dt>测量日期</dt>
            <dd>2025-09-08 14:52:20</dd>
            <dt>工件温度</dt>
            <dd>无</dd>
            <dt>评价结果</dt>
            <dd>OK</dd>
            <dt>尺寸总数</dt>
            <dd>2</dd>
          </dl>
          <div className="-mx-px mt-[27px] border-t-2 border-black">
            {results.map((f) => <FeatureTable key={f.id} feature={f} />)}
          </div>
        </div>
        <div className="mr-0.5 w-[15px] bg-[#f0f0f0] pb-[62px]">
          <div className="h-full bg-[#c9c9c9]" />
        </div>
        <div className="w-[42px] border-x border-[#6a6a6a] bg-[#f2f2f2]" />
      </div>
    </section>
  );
}

function DrawingPopup() {
  return (
    <div className="absolute top-[242px] right-[53px] h-[369px] w-[491px] bg-white shadow-[0_1px_6px_2px_rgba(40,40,80,0.4)]">
      <svg viewBox="0 1 491 369" className="h-full w-full font-['Liberation_Serif',serif]" fill="none" stroke="#222">
        <path d="M101 99h78v104h129V99h79v206H101z" strokeWidth="2" />
        <path d="M244 106v206" strokeWidth="2" strokeDasharray="6 3 2 3" />
        <path d="M179.500 47v47M308.500 47v47M53 99.500h43M53 305.500h43M101.500 310v34M387.500 312v32" stroke="#666" />
        <path d="M180 63.500h33M277 63.500h79M61.500 99v81M61.500 213v92M101 329.500h105M274 329.500h113M387 330.500h35" strokeWidth="1.300" />
        <path d="M356 53h83v20h-83zM381 53v20M420 53v20M422 320h17v20h-17z" strokeWidth="2" />
        <path d="M364 58.500h9M360 63.500h18M364 68.500h9" />
        <g fill="#000" stroke="none">
          <path d="m180 63.500 8-4v8zM308 63.500l-8-4v8zM61.500 99l-4 8h8zM61.500 305l-4-8h8zM101 329.500l8-4v8zM387 329.500l-8-4v8zM387 323v14l13-6.500z" />
          <g fontSize="15" textAnchor="middle" fill="#222" stroke="#222" strokeWidth="0.400">
            <text x="245" y="68">20 ± 0.5</text>
            <text x="61" y="201">30 ± 0.5</text>
            <text x="243" y="334">40 ± 0.5</text>
            <text x="400" y="68">0.2</text>
            <text x="430" y="68">A</text>
            <text x="431" y="335">A</text>
          </g>
        </g>
      </svg>
    </div>
  );
}

function Dock() {
  return (
    <div className="ml-auto flex h-[281px] w-[217px] flex-col bg-[#f2f2f2]">
      <div className="flex h-[27px] items-center justify-end bg-[#737d87] pt-2 pr-[14px]">
        <svg width="12" height="14" viewBox="0 0 12 14" fill="none" stroke="#eee" strokeWidth="2"><path d="m1 1 5 5 5-5M1 8l5 5 5-5" /></svg>
      </div>
      <div className="flex flex-1 items-start justify-between pr-[7px]">
        <input aria-label="名称" className="mt-[6px] h-[25px] w-[58px] border border-l-0 border-[#b0b0b0] bg-white" />
        <div className="mt-[5px] grid grid-cols-2 gap-x-[5px] gap-y-2">
          {dockTools.map((t) => (
            <button key={t} type="button" aria-label={t} className="flex h-[35px] w-[35px] items-center justify-center border border-[#b9bcc8] bg-[#ebecf0]">
              <Icon name={t} size={29} />
            </button>
          ))}
        </div>
      </div>
      <div className="flex h-8 gap-px border-t border-[#737d87] pt-0.5 pr-1 pb-0.5 text-xs text-black">
        <StatusCell className="w-[19px]" bad />
        <StatusCell className="w-[39px]" icon="box3d" />
        <StatusCell className="w-[39px]" icon="path" bad />
        <div className="flex flex-1 items-center justify-center gap-3 border border-[#b0b0b0]">
          <Icon name="unit" size={16} />
          mm
        </div>
        <div className="flex w-[39px] items-center justify-center border border-[#b0b0b0]">脱机</div>
      </div>
    </div>
  );
}

function StatusCell({ icon, bad = false, className }: { icon?: string; bad?: boolean; className: string }) {
  return (
    <div className={`flex items-center justify-center border border-[#b0b0b0] ${className}`}>
      {icon && <Icon name={icon} size={17} />}
      <svg width="11" height="11" viewBox="0 0 11 11" className="-ml-1 self-end" stroke="#fff" fill="none" strokeWidth="1.500">
        <circle cx="5.500" cy="5.500" r="5.500" fill={bad ? '#d8101c' : '#1cb46a'} stroke="none" />
        <path d={bad ? 'm3 3 5 5M8 3 3 8' : 'm2.500 5.500 2 2 4-4'} />
      </svg>
    </div>
  );
}

function ImeBar() {
  return (
    <div className="absolute right-[324px] bottom-0.5 flex h-6 items-center border border-[#b0b8c8] bg-white pr-1 pl-[18px]">
      <svg width="28" height="28" viewBox="0 0 28 28" className="absolute -top-1 -left-[14px]">
        <path d="m1 5 23-4q2 0 2 2l1 20q0 2-2 2L6 28q-2 0-2-2L0 7q0-2 1-2z" fill="#f4511e" />
        <path d="M22 7C15 5 7 7 8 11c1 4 12 2 12 6 0 4-7 6-13 4" fill="none" stroke="#fff" strokeWidth="3.500" />
      </svg>
      <svg width="170" height="18" viewBox="0 0 170 18" fill="none" stroke="#1d78c8" strokeWidth="2">
        <path d="M3 5h13v7H3zM9.500 1v16" />
        <circle cx="28" cy="6" r="1.500" strokeWidth="1.300" />
        <path d="M33 10v2l-2 3" />
        <circle cx="53" cy="9" r="7" strokeWidth="1.500" />
        <path d="M50 6v2M56 6v2M49 11c2 3 6 3 8 0" strokeWidth="1.500" />
        <rect x="73" y="1" width="5" height="9" rx="2.500" fill="#1d78c8" />
        <path d="M70 8c0 7 11 7 11 0M75.500 13v4" strokeWidth="1.500" />
        <path d="M90 3h15v12H90z" strokeWidth="1.500" />
        <path d="M92 6.500h11M92 9.500h11M94 12.500h7" strokeDasharray="2 1" />
        <circle cx="119" cy="5" r="3.500" fill="#b4bccb" stroke="none" />
        <path d="M113 16c0-9 12-9 12 0z" fill="#b4bccb" stroke="none" />
        <path d="m135 3 4-2c1 2 3 2 4 0l4 2 2 4-3 1v8h-10V8l-3-1z" fill="#1d78c8" stroke="none" />
        <path d="M156 2h6v6h-6zM156 10h6v6h-6zM164 10h6v6h-6z" fill="#1d78c8" stroke="none" />
        <path d="M164.700 2.700h4.600v4.600h-4.600z" strokeWidth="1.400" />
      </svg>
    </div>
  );
}

export default function App() {
  const [menu, setMenu] = useState('文件');

  return (
    <div className="flex min-h-screen flex-col border-r border-b-2 border-r-[#2f3a42] border-b-[#1f333b] bg-[#f2f2f2] font-['Open_Sans','Noto_Sans_CJK_SC',sans-serif]">
      <Gradients />
      <TitleBar active={menu} onSelect={setMenu} />
      <Ribbon />
      <Toolbar />
      <main className="flex flex-1">
        <ProgramPanel />
        <div className="relative flex flex-1 flex-col bg-[#c8c8ee]">
          <div className="flex flex-1">
            <div className="relative min-w-0 flex-1 overflow-hidden bg-linear-to-b from-[#a9a9dc] to-[#c8c8ee] to-45%">
              <div className="absolute inset-0"><CadScene /></div>
            </div>
            <ViewTools />
          </div>
          <Dock />
          <ReportWindow />
          <DrawingPopup />
          <ImeBar />
          <p className="pointer-events-none absolute right-0 bottom-[6px] text-[38px] leading-[54px] font-light whitespace-nowrap text-[#d4d4d4]/90 [text-shadow:1px_2px_1px_rgba(90,90,90,0.7)]">
            CSDN @心诚的文字
          </p>
        </div>
      </main>
    </div>
  );
}
